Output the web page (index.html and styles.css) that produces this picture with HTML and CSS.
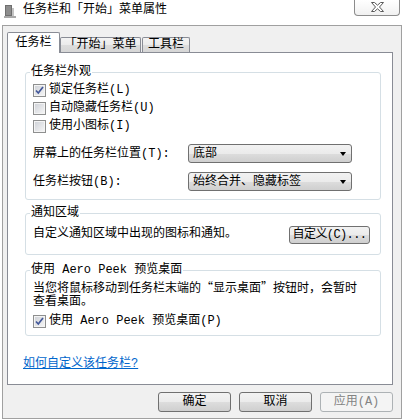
FILE: index.html
```html
<!DOCTYPE html>
<html lang="zh-CN">
<head>
    <meta charset="UTF-8">
    <title>任务栏和「开始」菜单属性</title>
    <link rel="stylesheet" href="styles.css">
</head>
<body>

<div class="window">
    <div class="titlebar">
        <svg class="app-icon" width="16" height="16" viewBox="0 0 16 16">
            <rect x="3" y="3" width="7" height="12" fill="#6f6f6f"/>
            <rect x="4" y="4" width="5" height="9" fill="#8d8d8d"/>
            <rect x="10" y="6" width="2" height="9" fill="#c4c4c4"/>
            <rect x="2" y="14" width="12" height="3" fill="#a9a9a9"/>
        </svg>
        <span class="title">任务栏和「开始」菜单属性</span>
        <div class="close">
            <svg width="15" height="10" viewBox="0 0 15 10">
                <polygon points="1.5,0.5 4.5,0.5 7.5,3.2 10.5,0.5 13.5,0.5 9.5,5 13.5,9.5 10.5,9.5 7.5,6.8 4.5,9.5 1.5,9.5 5.5,5" fill="#fff" stroke="#5a5a5a" stroke-width="1"/>
            </svg>
        </div>
    </div>

    <div class="frame">
        <div class="tabs">
            <div class="tab active">任务栏</div>
            <div class="tab tab-start">「开始」菜单</div>
            <div class="tab tab-tools">工具栏</div>
        </div>

        <div class="panel">
            <fieldset class="group group-look">
                <legend>任务栏外观</legend>
                <div class="group-body">
                    <div class="check-row">
                        <span class="cb"><svg width="11" height="11" viewBox="0 0 11 11"><path d="M2 5.5 L4.3 8 L9 2" fill="none" stroke="#43589a" stroke-width="1.7"/></svg></span>
                        <span>锁定任务栏(L)</span>
                    </div>
                    <div class="check-row">
                        <span class="cb"></span>
                        <span>自动隐藏任务栏(U)</span>
                    </div>
                    <div class="check-row">
                        <span class="cb"></span>
                        <span>使用小图标(I)</span>
                    </div>
                    <div class="field-row">
                        <span class="field-label">屏幕上的任务栏位置(T):</span>
                        <div class="select">底部<span class="arrow"></span></div>
                    </div>
                    <div class="field-row">
                        <span class="field-label">任务栏按钮(B):</span>
                        <div class="select">始终合并、隐藏标签<span class="arrow"></span></div>
                    </div>
                </div>
            </fieldset>

            <fieldset class="group group-notify">
                <legend>通知区域</legend>
                <div class="group-body notify-row">
                    <span class="notify-text">自定义通知区域中出现的图标和通知。</span>
                    <div class="btn btn-custom">自定义(C)...</div>
                </div>
            </fieldset>

            <fieldset class="group group-peek">
                <legend>使用 Aero Peek 预览桌面</legend>
                <div class="group-body">
                    <p class="peek-text">当您将鼠标移动到任务栏末端的<span class="q q-open">“</span>显示桌面<span class="q q-close">”</span>按钮时，会暂时<br>查看桌面。</p>
                    <div class="check-row peek-check">
                        <span class="cb"><svg width="11" height="11" viewBox="0 0 11 11"><path d="M2 5.5 L4.3 8 L9 2" fill="none" stroke="#43589a" stroke-width="1.7"/></svg></span>
                        <span>使用 Aero Peek 预览桌面(P)</span>
                    </div>
                </div>
            </fieldset>

            <a class="help" href="#">如何自定义该任务栏?</a>
        </div>

        <div class="buttons">
            <div class="btn btn-dialog">确定</div>
            <div class="btn btn-dialog">取消</div>
            <div class="btn btn-dialog disabled">应用(A)</div>
        </div>
    </div>
</div>

</body>
</html>
```

FILE: styles.css
```css
body {
    margin: 0;
    font-family: "Liberation Mono", "Noto Sans CJK SC", monospace;
    font-size: 12px;
    line-height: 14px;
    color: #000;
    background-color: #fff;
}
.window {
    width: 403px;
    height: 420px;
    background-color: #fff;
    overflow: hidden;
}
.titlebar {
    height: 25px;
    display: flex;
    align-items: flex-start;
}
.app-icon {
    margin: 2px 0 0 2px;
}
.title {
    margin: 3px 0 0 5px;
}
.close {
    margin-left: auto;
    margin-right: 3px;
    width: 46px;
    height: 16px;
    box-sizing: border-box;
    border: 1px solid #8c8c8c;
    border-top: none;
    border-radius: 0 0 4px 4px;
    background: linear-gradient(#ffffff, #f1f1f1);
    display: flex;
    justify-content: center;
    padding-top: 2px;
}
.frame {
    margin-left: 2px;
    width: 400px;
    height: 394px;
    box-sizing: border-box;
    border: 1px solid #a0a0a0;
    background-color: #f0f0f0;
    padding: 6px 8px 0 4px;
}
.tabs {
    display: flex;
    align-items: flex-end;
    height: 21px;
    margin-bottom: -1px;
    position: relative;
    z-index: 1;
}
.tab {
    box-sizing: border-box;
    height: 15px;
    margin-bottom: 1px;
    border: 1px solid #898c95;
    border-bottom: none;
    border-radius: 2px 2px 0 0;
    background: linear-gradient(#f3f3f3, #ebebeb 50%, #dddddd 50%, #d6d6d6);
    text-align: center;
    white-space: nowrap;
}
.tab.active {
    width: 53px;
    height: 21px;
    margin-bottom: 0;
    padding-top: 3px;
    background: #fff;
}
.tab-start {
    width: 81px;
}
.tab-tools {
    width: 48px;
    margin-left: 1px;
}
.panel {
    box-sizing: border-box;
    width: 386px;
    height: 333px;
    border: 1px solid #898c95;
    background-color: #fff;
}
.group {
    margin: 12px 0 0 17px;
    padding: 0;
    width: 356px;
    min-width: 0;
    box-sizing: border-box;
    border: 1px solid #d5dfe5;
    border-radius: 3px;
}
.group legend {
    margin-left: 4px;
    padding: 0 1px;
}
.group-body {
    padding: 2px 0 8px 7px;
}
.check-row {
    display: flex;
    align-items: center;
    gap: 3px;
    height: 18px;
}
.cb {
    width: 13px;
    height: 13px;
    box-sizing: border-box;
    border: 1px solid #8e8f8f;
    background: linear-gradient(135deg, #cdd0d6, #f7f7f7);
    box-shadow: inset 0 0 0 1px #f4f4f4;
    flex-shrink: 0;
}
.cb svg {
    display: block;
}
.field-row {
    display: flex;
    align-items: center;
    height: 19px;
    margin-top: 9px;
}
.field-label {
    width: 155px;
}
.select {
    position: relative;
    box-sizing: border-box;
    width: 164px;
    height: 19px;
    padding: 2px 0 0 4px;
    border: 1px solid #707070;
    border-radius: 3px;
    background: linear-gradient(#f2f2f2, #ebebeb 50%, #dddddd 50%, #cfcfcf);
}
.arrow {
    position: absolute;
    right: 5px;
    top: 7px;
    border-left: 3.5px solid transparent;
    border-right: 3.5px solid transparent;
    border-top: 4px solid #000;
}
.group-notify {
    margin-top: 6px;
}
.notify-row {
    display: flex;
    justify-content: space-between;
    align-items: center;
    padding: 6px 10px 10px 7px;
}
.notify-text {
    margin-top: -3px;
}
.btn {
    box-sizing: border-box;
    border: 1px solid #707070;
    border-radius: 3px;
    background: linear-gradient(#f2f2f2, #ebebeb 50%, #dddddd 50%, #cfcfcf);
    text-align: center;
    white-space: nowrap;
}
.btn-custom {
    width: 81px;
    height: 18px;
    padding-top: 1px;
    letter-spacing: -0.6px;
}
.group-peek {
    margin-top: 8px;
}
.group-peek .group-body {
    padding-bottom: 5px;
}
.peek-text {
    margin: 0;
    padding-top: 1px;
    line-height: 13px;
    white-space: nowrap;
}
.q {
    display: inline-block;
    width: 12px;
    font-family: "Noto Sans CJK SC", sans-serif;
}
.q-open {
    text-align: right;
}
.q-close {
    text-align: left;
}
.peek-check {
    margin-top: 3px;
}
.help {
    display: inline-block;
    margin: 21px 0 0 15px;
    color: #0066cc;
    text-decoration: underline;
}
.buttons {
    display: flex;
    justify-content: flex-end;
    gap: 8px;
    margin-top: 7px;
}
.btn-dialog {
    width: 73px;
    height: 20px;
    padding-top: 2px;
}
.btn.disabled {
    border-color: #adb2b5;
    background: #f4f4f4;
    color: #838383;
}
```
